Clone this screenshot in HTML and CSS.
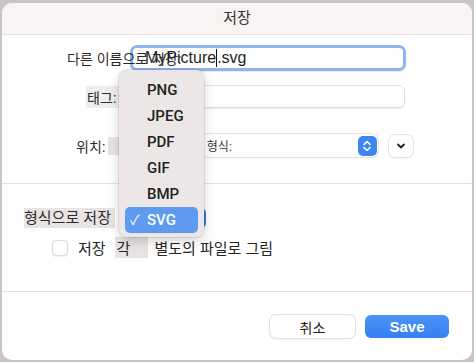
FILE: index.html
```html
<!DOCTYPE html>
<html lang="ko">
<head>
  <meta charset="UTF-8" />
  <title>저장</title>
  <link rel="stylesheet" href="styles.css">
</head>
<body>
  <div class="window">
    <div class="titlebar">저장</div>

    <div class="top-section">
      <div class="row row-name">
        <span class="label label-name">다른 이름으로 저장:</span>
        <div class="field field-name">MyPicture<span class="caret"></span>.svg</div>
      </div>
      <div class="row row-tags">
        <span class="label label-tags">태그:</span>
        <div class="field field-tags"></div>
      </div>
      <div class="row row-where">
        <span class="label label-where">위치:</span>
        <span class="patch"></span>
        <div class="popup">
          <span class="popup-text">형식:</span>
          <span class="stepper">
            <svg width="12" height="14" viewBox="0 0 12 14" fill="none">
              <path d="M3 5.5L6 2.5L9 5.5" stroke="#fff" stroke-width="1.6" stroke-linecap="round" stroke-linejoin="round"/>
              <path d="M3 8.5L6 11.5L9 8.5" stroke="#fff" stroke-width="1.6" stroke-linecap="round" stroke-linejoin="round"/>
            </svg>
          </span>
        </div>
        <button class="expand-btn" aria-label="Expand">
          <svg width="10" height="8" viewBox="0 0 10 8" fill="none">
            <path d="M2 2.5L5 5.5L8 2.5" stroke="#222" stroke-width="1.8" stroke-linecap="round" stroke-linejoin="round"/>
          </svg>
        </button>
      </div>
    </div>

    <div class="mid-section">
      <div class="row row-format">
        <span class="label label-format">형식으로 저장</span>
        <div class="format-btn"></div>
      </div>
      <div class="row row-check">
        <span class="checkbox"></span>
        <span class="check-text">저장</span>
        <span class="check-text check-mark">각</span>
        <span class="check-text">별도의 파일로 그림</span>
      </div>
    </div>

    <div class="footer">
      <button class="btn btn-cancel">취소</button>
      <button class="btn btn-save">Save</button>
    </div>

    <!-- format menu, open over the dialog -->
    <ul class="format-menu">
      <li>PNG</li>
      <li>JPEG</li>
      <li>PDF</li>
      <li>GIF</li>
      <li>BMP</li>
      <li class="selected"><span class="tick">✓</span>SVG</li>
    </ul>
  </div>
</body>
</html>
```

FILE: styles.css
```css
html, body {
  box-sizing: border-box;
}
body {
  margin: 0;
  width: 474px;
  height: 362px;
  overflow: hidden;
  background: #c9c5c4;
  font-family: "Liberation Sans", "Noto Sans CJK KR", sans-serif;
  color: #262626;
}
.window {
  position: relative;
  margin: 3px 2px 0 2px;
  width: 470px;
  height: 357px;
  background: #fff;
  border-radius: 10px;
  overflow: hidden;
  display: flex;
  flex-direction: column;
}
.titlebar {
  height: 31px;
  line-height: 29px;
  text-align: center;
  font-size: 15px;
  color: #333;
  background: #f7f4f3;
  border-bottom: 1px solid #e6e2e1;
}
.row {
  display: flex;
  align-items: center;
}
.label {
  font-size: 14px;
  white-space: nowrap;
  color: #2b2b2b;
}
.top-section {
  padding: 10px 0 26px 0;
  border-bottom: 1px solid #e4e0df;
}
.row-name {
  height: 26px;
}
.label-name {
  margin-left: 65px;
  width: 63px;
  position: relative;
  z-index: 1;
}
.field {
  background: #fff;
  border: 1px solid #e2dfde;
  border-radius: 6px;
  box-shadow: 0 1px 1px rgba(0,0,0,0.08);
}
.field-name {
  box-sizing: border-box;
  width: 276px;
  height: 26px;
  border: 3px solid #8fb3ef;
  border-radius: 7px;
  padding-left: 12px;
  font-size: 16px;
  line-height: 20px;
  color: #1e1e1e;
}
.caret {
  display: inline-block;
  width: 1px;
  height: 18px;
  background: #111;
  vertical-align: -4px;
}
.row-tags {
  margin-top: 14px;
  height: 23px;
}
.label-tags {
  margin-left: 84px;
  padding: 1px 3px 1px 1px;
  background: #f0eded;
}
.field-tags {
  box-sizing: border-box;
  margin-left: 80px;
  width: 205px;
  height: 23px;
}
.row-where {
  margin-top: 26px;
  height: 23px;
}
.label-where {
  margin-left: 74px;
}
.patch {
  width: 18px;
  height: 18px;
  background: #e8e4e3;
  margin-left: 2px;
}
.popup {
  box-sizing: border-box;
  margin-left: 76px;
  width: 176px;
  height: 23px;
  display: flex;
  align-items: center;
  justify-content: space-between;
  padding: 0 1px 0 5px;
  background: #fff;
  border-radius: 6px;
  box-shadow: 0 0 0 1px #e6e3e2, 0 1px 2px rgba(0,0,0,0.1);
}
.popup-text {
  font-size: 12px;
  color: #333;
}
.stepper {
  width: 19px;
  height: 20px;
  border-radius: 5px;
  background: #3d86ee;
  display: flex;
  align-items: center;
  justify-content: center;
}
.expand-btn {
  margin-left: 11px;
  width: 24px;
  height: 22px;
  padding: 0;
  border: none;
  border-radius: 6px;
  background: #fff;
  box-shadow: 0 0 0 1px #e6e3e2, 0 1px 2px rgba(0,0,0,0.12);
  display: flex;
  align-items: center;
  justify-content: center;
}
.mid-section {
  padding: 24px 0 0 0;
  height: 83px;
  border-bottom: 1px solid #e4e0df;
}
.row-format {
  height: 20px;
}
.label-format {
  margin-left: 22px;
  background: #e8e4e3;
  font-size: 15px;
  line-height: 20px;
  padding-right: 4px;
}
.format-btn {
  margin-left: 5px;
  width: 86px;
  height: 20px;
  border-radius: 5px;
  background: #3a7de6;
}
.row-check {
  margin-top: 11px;
  height: 17px;
}
.checkbox {
  box-sizing: border-box;
  margin-left: 50px;
  width: 16px;
  height: 16px;
  border-radius: 4px;
  border: 1px solid #dcd9d8;
  background: #fff;
  box-shadow: 0 1px 1px rgba(0,0,0,0.06);
}
.check-text {
  font-size: 15px;
  margin-left: 10px;
}
.check-mark {
  margin-left: 9px;
  background: #e8e4e3;
  padding: 0 18px 0 2px;
  margin-right: -4px;
}
.footer {
  flex: 1;
  display: flex;
  justify-content: flex-end;
  align-items: flex-start;
  padding: 23px 23px 0 0;
  gap: 10px;
}
.btn {
  width: 85px;
  height: 23px;
  border-radius: 6px;
  font-size: 14px;
  padding: 0;
  border: none;
  font-family: "Liberation Sans", "Noto Sans CJK KR", sans-serif;
}
.btn-cancel {
  background: #fff;
  color: #222;
  box-shadow: 0 0 0 1px #e3e0df, 0 1px 2px rgba(0,0,0,0.12);
}
.btn-save {
  width: 84px;
  background: linear-gradient(180deg, #4a93f5 0%, #3680ef 100%);
  color: #fff;
  font-weight: 700;
  font-size: 15px;
}
.format-menu {
  position: absolute;
  left: 117px;
  top: 67px;
  width: 85px;
  margin: 0;
  padding: 7px 0 4px 0;
  list-style: none;
  background: #ece7e6;
  border-radius: 8px;
  box-shadow: 0 0 0 1px rgba(0,0,0,0.08), 0 4px 12px rgba(0,0,0,0.18);
  z-index: 5;
}
.format-menu li {
  height: 26px;
  line-height: 26px;
  padding-left: 28px;
  font-family: Roboto, "Liberation Sans", sans-serif;
  font-weight: 500;
  font-size: 15px;
  color: #222;
  position: relative;
}
.format-menu li.selected {
  margin: 0 6px;
  padding-left: 22px;
  border-radius: 5px;
  background: #5d9af0;
  color: #fff;
}
.tick {
  position: absolute;
  left: 5px;
  font-size: 14px;
}
```
